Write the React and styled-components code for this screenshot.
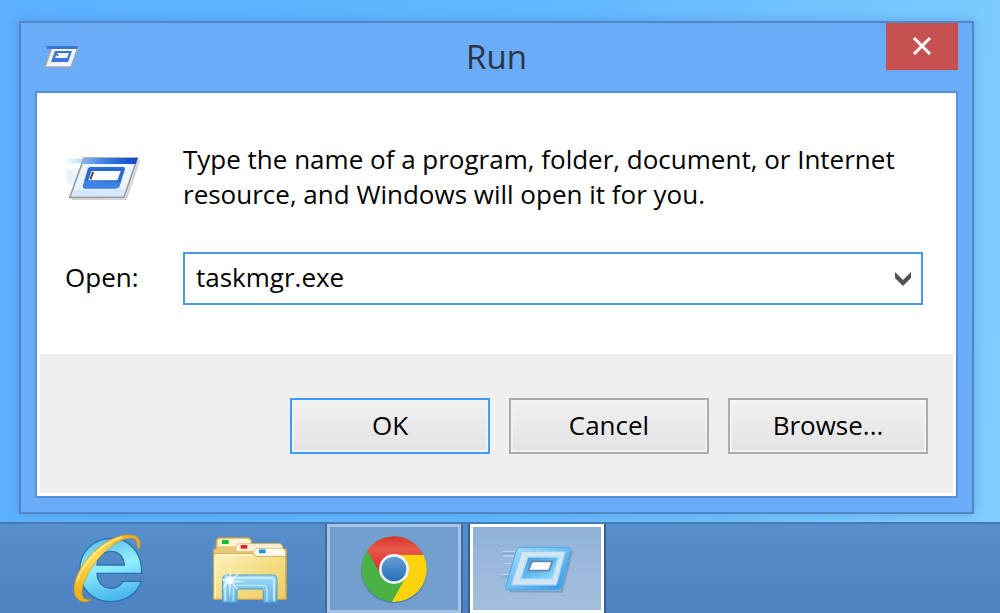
import React, { useState } from 'react'
import styled, { createGlobalStyle } from 'styled-components'

const GlobalStyle = createGlobalStyle`
  * {
    box-sizing: border-box;
  }
  body {
    margin: 0;
    font-family: 'Open Sans', 'Noto Sans', sans-serif;
    font-size: 26px;
    font-weight: 500;
    color: #000;
  }
`
const Desktop = styled.div`
  min-height: 100vh;
  display: flex;
  flex-direction: column;
  justify-content: space-between;
  overflow: hidden;
  background: linear-gradient(100deg, #5cb0ff 0%, #62b8ff 50%, #7ccaff 90%, #80ccff 100%);
`
const Dialog = styled.form`
  margin: 21px 26px 8px 19px;
  padding: 0 14px 14px;
  border: 2px solid #4f86c6;
  background-color: #6aacf7;
  box-shadow: 0 0 10px rgba(40, 90, 160, 0.3);
`
const TitleBar = styled.header`
  height: 68px;
  display: grid;
  grid-template-columns: 72px 1fr 72px;
  align-items: center;
`
const TitleIcon = styled.div`
  padding-left: 8px;
  display: flex;
`
const Title = styled.h1`
  margin: 0;
  font-size: 33px;
  font-weight: 400;
  line-height: 68px;
  text-align: center;
  color: #2b3444;
`
const CloseButton = styled.button`
  align-self: start;
  height: 47px;
  padding: 0;
  border: 1px solid #d34a48;
  border-top: 0;
  background-color: #c75050;
  display: flex;
  align-items: center;
  justify-content: center;
`
const Panel = styled.div`
  border: 2px solid #5592da;
  background-color: #fff;
`
const Content = styled.div`
  padding: 49px 33px 49px 28px;
  display: grid;
  grid-template-columns: 118px 1fr;
  row-gap: 40px;
  align-items: center;
`
const Message = styled.p`
  margin: 0;
  line-height: 35px;
`
const OpenLabel = styled.label`
  padding-bottom: 2px;
  line-height: 35px;
`
const ComboBox = styled.div`
  height: 53px;
  border: 2px solid #4a96e8;
  background-color: #fff;
  display: flex;
`
const ComboInput = styled.input`
  flex: 1;
  min-width: 0;
  padding: 0 11px 4px;
  border: 0;
  outline: 0;
  background: none;
  font: inherit;
  color: inherit;
`
const ComboToggle = styled.button`
  width: 36px;
  padding: 0;
  border: 0;
  background: none;
  display: flex;
  align-items: center;
  justify-content: center;
`
const Footer = styled.footer`
  margin: 0 3px 3px;
  padding: 44px 25px 39px;
  background-color: #efefef;
  display: flex;
  justify-content: flex-end;
  gap: 19px;
`
const DialogButton = styled.button`
  width: 200px;
  height: 56px;
  padding: 0 0 2px;
  border: 2px solid ${props => props.$primary ? '#3c9bff' : '#acacac'};
  background: linear-gradient(#f1f1f1, #e3e3e3);
  box-shadow: inset 0 0 0 2px #f4f2ef;
  font: inherit;
  color: inherit;
`
const Taskbar = styled.nav`
  height: 91px;
  padding-left: 39px;
  border-top: 2px solid #457ab5;
  background: linear-gradient(#568fcc, #4c82bf);
  display: flex;
  gap: 5px;
`
const itemStates = {
  idle: { line: 'transparent', fill: 'transparent', edge: 'transparent' },
  open: { line: '#a6c3e4', fill: '#739fce', edge: '#3d6da3' },
  active: { line: '#fff', fill: 'linear-gradient(#8fb1d8, #a5c0de)', edge: '#3a5f8e' },
}
const TaskItem = styled.button`
  width: 138px;
  padding: 0;
  border: 2px solid ${props => itemStates[props.$state].edge};
  border-top: 0;
  border-bottom: 0;
  background: ${props => itemStates[props.$state].fill};
  box-shadow: inset 0 0 0 3px ${props => itemStates[props.$state].line};
  display: flex;
  align-items: center;
  justify-content: center;
`

const RunIcon = () => (
  <svg width="75" height="45" viewBox="44 46 226 136" aria-hidden="true">
    <defs>
      <linearGradient id="runBar">
        <stop offset="0" stopColor="#8fb8ef" />
        <stop offset="0.4" stopColor="#3f7fdf" />
        <stop offset="1" stopColor="#0d47c4" />
      </linearGradient>
      <linearGradient id="runTrail">
        <stop offset="0" stopColor="#d5eafb" stopOpacity="0.4" />
        <stop offset="1" stopColor="#b5d9f8" />
      </linearGradient>
    </defs>
    <path d="M46 57H100L94 72H46Z" fill="url(#runTrail)" />
    <path d="M46 88H90L70 136H52Z" fill="#e9f4fd" />
    <path d="M64 180L227 181L268 62" fill="none" stroke="#000" strokeOpacity="0.18" strokeWidth="6" />
    <path d="M101 55H263L222 174H58Z" fill="#eaf4fd" stroke="#999c9f" strokeWidth="5" />
    <path d="M74 150H226L219 170H65Z" fill="#d3e8fa" />
    <path d="M101 55H263L257 73H95Z" fill="url(#runBar)" />
    <path d="M119 82H220Q227 83 224 91L208 141Q205 147 197 147H104Q96 146 98 139L112 89Q114 83 119 82Z" fill="#2d69d5" />
    <path d="M104 124L212 128L208 141Q205 147 197 147H104Q96 146 98 139Z" fill="#3e82e5" />
    <path d="M124 94H212L202 122H114Z" fill="#fff" />
    <path d="M129 97L120 120" stroke="#54483c" strokeWidth="6" />
  </svg>
)

const RunSmallIcon = () => (
  <svg width="36" height="24" viewBox="0 0 36 24" aria-hidden="true">
    <path d="M9 2H35L28 22H2Z" fill="#f1f5fb" stroke="#a3a9b3" strokeWidth="1.5" />
    <path d="M3 1H35L34 4H4Z" fill="#3a76d8" />
    <path d="M12 6H29L25 17H8Z" fill="#3976da" />
    <path d="M14 8H26L24 13H12Z" fill="#f3f7fd" />
    <path d="M13 8L15 11" stroke="#6b7788" strokeWidth="2" />
  </svg>
)

const RunTaskIcon = () => (
  <svg width="72" height="48" viewBox="573 104 216 144" aria-hidden="true">
    <defs>
      <linearGradient id="taskFrame" x2="1" y2="1">
        <stop offset="0" stopColor="#a6e2fc" />
        <stop offset="0.5" stopColor="#6abdf1" />
        <stop offset="1" stopColor="#3295e4" />
      </linearGradient>
      <linearGradient id="taskScreen" y2="1">
        <stop offset="0" stopColor="#3f97dd" />
        <stop offset="1" stopColor="#8bdcfb" />
      </linearGradient>
    </defs>
    <path d="M600 243L755 244L786 122" fill="none" stroke="#4b6c94" strokeOpacity="0.4" strokeWidth="6" />
    <path d="M576 123H616M580 137H612M584 160H602M574 192H600M588 209H592" stroke="#b9d3ee" strokeWidth="4" />
    <path d="M578 129H612M576 197H598" stroke="#6f9fd2" strokeWidth="3" />
    <path d="M632 111H776Q784 112 782 120L754 231Q752 238 744 238H592Q585 237 587 229L620 118Q623 111 632 111Z" fill="url(#taskFrame)" stroke="#4ba7e9" strokeWidth="3" />
    <path d="M636 124H766L739 224H604Z" fill="#d6e3f0" stroke="#9fd0f2" strokeWidth="3" />
    <path d="M653 140H746L727 206H631Z" fill="url(#taskScreen)" stroke="#a5dffa" strokeWidth="5" />
    <path d="M666 153H727L717 181H655Z" fill="#fff" stroke="#5f86b4" strokeWidth="5" />
  </svg>
)

const ExplorerIcon = () => (
  <svg width="72" height="72" viewBox="61 36 216 216" aria-hidden="true">
    <defs>
      <linearGradient id="ieBody" x1="0" y1="0" x2="0.2" y2="1">
        <stop offset="0" stopColor="#55b9e8" />
        <stop offset="0.5" stopColor="#93efff" />
        <stop offset="1" stopColor="#4bb9ed" />
      </linearGradient>
      <linearGradient id="ieRing" x1="1" y1="0" x2="0" y2="1">
        <stop offset="0" stopColor="#e9a51d" />
        <stop offset="0.5" stopColor="#ffdc55" />
        <stop offset="1" stopColor="#f0a90c" />
      </linearGradient>
    </defs>
    <path
      d="M270 157C272 96 235 52 179 52C122 53 84 94 84 148C85 204 122 242 176 242C222 241 257 218 268 181H214C206 195 194 202 177 202C153 201 137 184 136 157ZM136 132C139 107 155 91 178 91C201 91 216 107 218 132Z"
      fill="url(#ieBody)"
      fillRule="evenodd"
      stroke="#2b70b0"
      strokeWidth="4"
    />
    <path
      d="M262 85C274 47 249 35 208 44C153 57 94 113 73 172C59 211 69 243 104 243L119 236C94 239 85 226 94 194C109 144 155 86 203 61C234 45 258 47 257 75Z"
      fill="url(#ieRing)"
      stroke="#cf9218"
      strokeWidth="2"
    />
    <path d="M75 184C94 124 146 70 210 48" fill="none" stroke="#fff0a0" strokeWidth="4" />
  </svg>
)

const FolderIcon = () => (
  <svg width="78" height="70" viewBox="487 47 234 210" aria-hidden="true">
    <defs>
      <linearGradient id="folderFront" x2="1" y2="1">
        <stop offset="0" stopColor="#fdf3be" />
        <stop offset="0.5" stopColor="#f5dd85" />
        <stop offset="1" stopColor="#eccb62" />
      </linearGradient>
      <linearGradient id="folderStand" x2="0" y2="1">
        <stop offset="0" stopColor="#9ddcf7" />
        <stop offset="1" stopColor="#66b3e4" />
      </linearGradient>
    </defs>
    <path d="M491 243V92H499V67L506 58H598L606 66V76H692L700 84V92H710V243Z" fill="#e9ca74" stroke="#c49b49" strokeWidth="3" />
    <path d="M509 62H596L601 68V84H505V68Z" fill="#fdf5d3" />
    <rect x="517" y="65" width="20" height="12" fill="#12bd28" />
    <path d="M558 86L566 76H692L698 84V100H558Z" fill="#fcf2d2" stroke="#d0ad65" strokeWidth="2" />
    <rect x="573" y="80" width="20" height="11" fill="#df2635" />
    <path d="M610 104L620 90H700L708 100V120H610Z" fill="#fffdf5" stroke="#d0ad65" strokeWidth="2" />
    <rect x="628" y="93" width="20" height="12" fill="#2497ed" />
    <path d="M493 106H610L620 114H708V242H493Z" fill="url(#folderFront)" stroke="#d3ad55" strokeWidth="3" />
    <path d="M497 240V110H608" fill="none" stroke="#fff8d3" strokeWidth="4" />
    <path
      d="M530 170H671Q682 171 682 183V252H641V218Q640 212 633 212H570Q562 212 562 219V252H518V183Q519 171 530 170Z"
      fill="url(#folderStand)"
      stroke="#4e9fcc"
      strokeWidth="3"
    />
    <path d="M527 248V188Q528 179 537 179H664Q673 180 673 188V248" fill="none" stroke="#d5f2ff" strokeWidth="5" />
    <path d="M551 249V211Q553 201 565 201H639Q651 202 652 213V249" fill="none" stroke="#bce6fa" strokeWidth="4" />
    <path d="M541 138L546 178L575 157L552 185L592 189L552 193L566 216L545 197L540 240L536 197L516 212L530 189L504 184L532 180L518 158L538 177Z" fill="#fff" fillOpacity="0.6" />
    <circle cx="541" cy="187" r="10" fill="#fff" fillOpacity="0.7" />
  </svg>
)

const ChromeIcon = () => (
  <svg width="72" height="72" viewBox="143 69 216 216" aria-hidden="true">
    <defs>
      <linearGradient id="chromeRed" x2="0" y2="1">
        <stop offset="0" stopColor="#d9322b" />
        <stop offset="0.35" stopColor="#e9584c" />
        <stop offset="1" stopColor="#dc2525" />
      </linearGradient>
      <linearGradient id="chromeBlue" x2="0" y2="1">
        <stop offset="0" stopColor="#639fd8" />
        <stop offset="1" stopColor="#286fb4" />
      </linearGradient>
    </defs>
    <circle cx="251" cy="181" r="99" fill="#24476d" fillOpacity="0.35" />
    <circle cx="251" cy="177" r="98" fill="#4ab244" />
    <path d="M251 134H339A98 98 0 0 1 245 275L288 199Z" fill="#fdd30c" />
    <path d="M339 134A98 98 0 0 0 171 121L208 188L251 134Z" fill="url(#chromeRed)" />
    <circle cx="251" cy="177" r="45" fill="#f0f4f5" />
    <circle cx="251" cy="177" r="37" fill="url(#chromeBlue)" />
  </svg>
)

const tasks = [
  { name: 'Internet Explorer', state: 'idle', icon: <ExplorerIcon /> },
  { name: 'File Explorer', state: 'idle', icon: <FolderIcon /> },
  { name: 'Google Chrome', state: 'open', icon: <ChromeIcon /> },
  { name: 'Run', state: 'active', icon: <RunTaskIcon /> },
]

const App = () => {
  const [command, setCommand] = useState('taskmgr.exe')

  return (
    <Desktop>
      <GlobalStyle />
      <Dialog onSubmit={e => e.preventDefault()}>
        <TitleBar>
          <TitleIcon>
            <RunSmallIcon />
          </TitleIcon>
          <Title>Run</Title>
          <CloseButton type="button" aria-label="Close">
            <svg width="20" height="18" viewBox="0 0 20 18" aria-hidden="true">
              <path d="M2 1L18 17M18 1L2 17" stroke="#fff" strokeWidth="3" />
            </svg>
          </CloseButton>
        </TitleBar>
        <Panel>
          <Content>
            <RunIcon />
            <Message>
              Type the name of a program, folder, document, or Internet
              resource, and Windows will open it for you.
            </Message>
            <OpenLabel htmlFor="command">Open:</OpenLabel>
            <ComboBox>
              <ComboInput
                id="command"
                type="text"
                value={command}
                onChange={e => setCommand(e.target.value)}
              />
              <ComboToggle type="button" aria-label="Show recent commands">
                <svg width="18" height="14" viewBox="0 0 18 14" aria-hidden="true">
                  <path d="M1 0L9 8L17 0V6L9 14L1 6Z" fill="#505050" />
                </svg>
              </ComboToggle>
            </ComboBox>
          </Content>
          <Footer>
            <DialogButton type="submit" $primary>OK</DialogButton>
            <DialogButton type="button">Cancel</DialogButton>
            <DialogButton type="button">Browse...</DialogButton>
          </Footer>
        </Panel>
      </Dialog>
      <Taskbar>
        {tasks.map(task => (
          <TaskItem key={task.name} type="button" aria-label={task.name} $state={task.state}>
            {task.icon}
          </TaskItem>
        ))}
      </Taskbar>
    </Desktop>
  )
}

export default App
